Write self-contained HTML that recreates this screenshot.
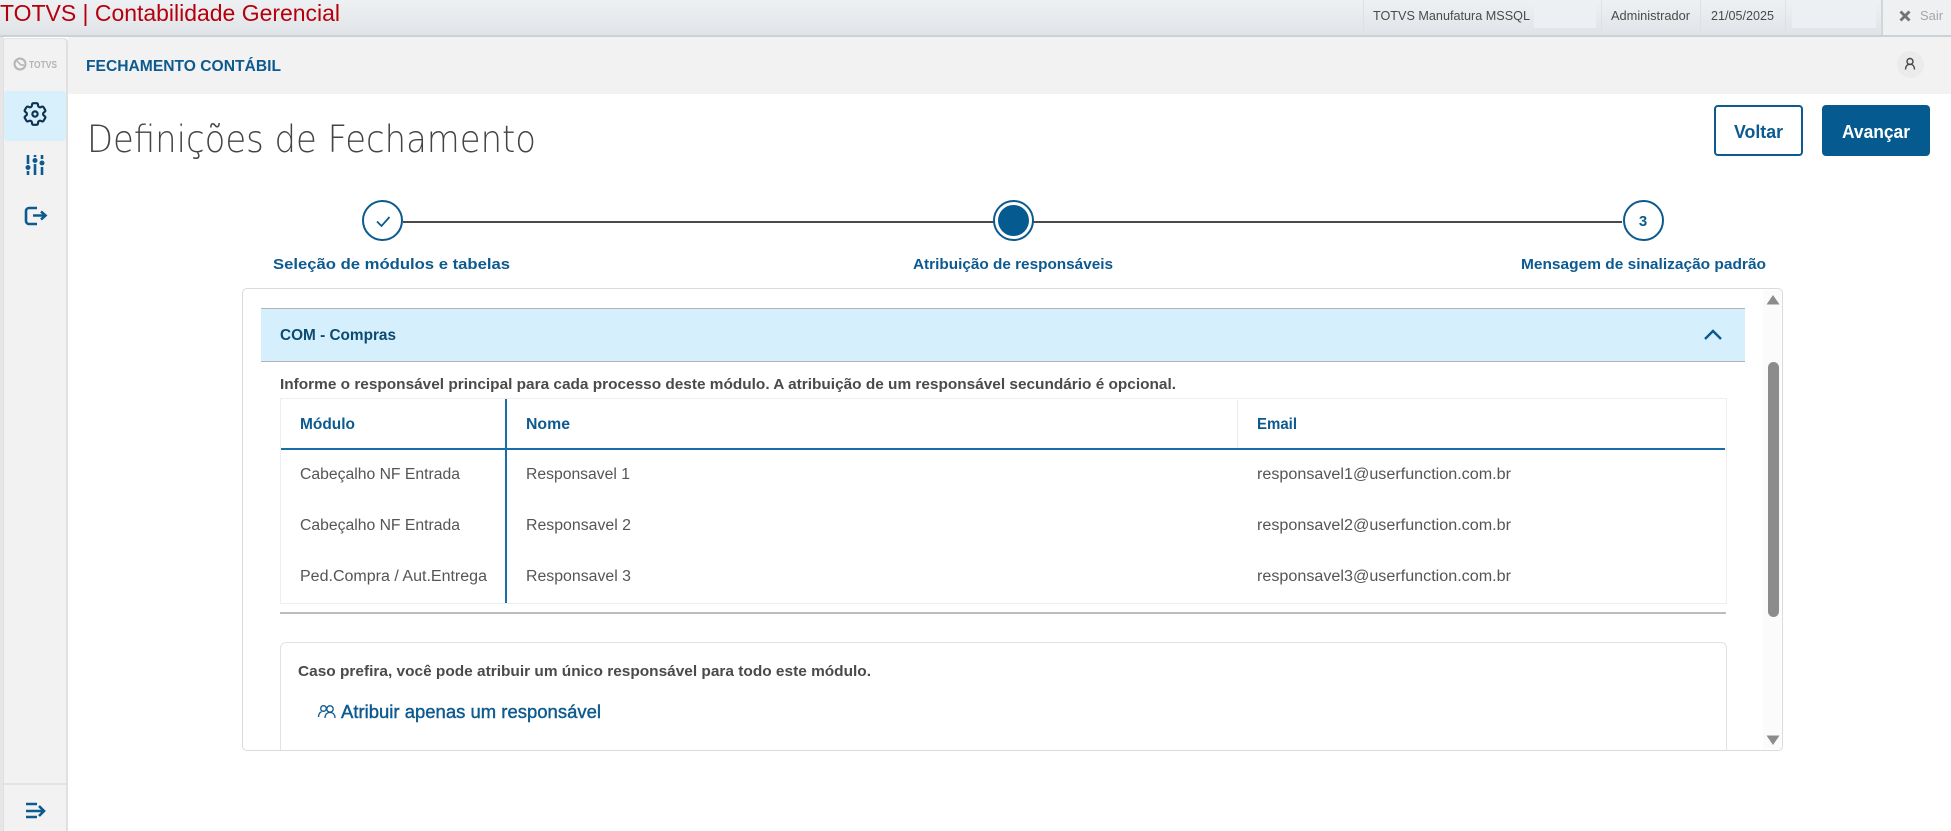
<!DOCTYPE html>
<html lang="pt-BR">
<head>
<meta charset="utf-8">
<title>Definições de Fechamento</title>
<style>
html,body{margin:0;padding:0;width:1951px;height:831px;overflow:hidden;background:#fff;font-family:"Liberation Sans",sans-serif}
.b{position:absolute;box-sizing:border-box}
svg{position:absolute;left:0;top:0}
text{font-family:"Liberation Sans",sans-serif}
</style>
</head>
<body>
<div class="b" style="left:0;top:0;width:1951px;height:37px;background:linear-gradient(#eef1f3,#e0e4e8);border-bottom:2px solid #cdd1d5"></div>
<div class="b" style="left:1534px;top:0;width:62px;height:28px;background:#edf0f3"></div>
<div class="b" style="left:1792px;top:0;width:84px;height:28px;background:#edf0f3"></div>
<div class="b" style="left:1363px;top:0;width:1px;height:35px;background:#dde1e4"></div>
<div class="b" style="left:1601px;top:0;width:1px;height:35px;background:#dde1e4"></div>
<div class="b" style="left:1700px;top:0;width:1px;height:35px;background:#dde1e4"></div>
<div class="b" style="left:1785px;top:0;width:1px;height:35px;background:#dde1e4"></div>
<div class="b" style="left:1881px;top:0;width:70px;height:35px;background:#eef0f2;border-left:2px solid #d2d6da"></div>

<div class="b" style="left:0;top:37px;width:4px;height:794px;background:#e6e6e6"></div>
<div class="b" style="left:3px;top:38px;width:65px;height:793px;background:#f2f2f2;border:1px solid #e0e0e0;border-right:2px solid #e0e0e0;border-bottom:0;border-radius:4px 4px 0 0"></div>
<div class="b" style="left:4px;top:91px;width:62px;height:50px;background:#d8effc;border-radius:3px"></div>
<div class="b" style="left:4px;top:783px;width:62px;height:2px;background:#e2e2e2"></div>
<div class="b" style="left:68px;top:37px;width:1883px;height:57px;background:#f2f2f2"></div>
<div class="b" style="left:1897px;top:51px;width:27px;height:27px;border-radius:50%;background:#ebebeb"></div>

<div class="b" style="left:1714px;top:105px;width:89px;height:51px;background:#fff;border:2px solid #0c5a8f;border-radius:4px"></div>
<div class="b" style="left:1822px;top:105px;width:108px;height:51px;background:#055a8f;border-radius:4px"></div>

<div class="b" style="left:403px;top:221px;width:1219px;height:2px;background:#4a4a4a"></div>
<div class="b" style="left:362px;top:200px;width:41px;height:41px;background:#fff;border:2px solid #0c5a8f;border-radius:50%"></div>
<div class="b" style="left:993px;top:200px;width:41px;height:41px;background:#fff;border:2px solid #0c5a8f;border-radius:50%"></div>
<div class="b" style="left:998px;top:205px;width:31px;height:31px;background:#055a8f;border-radius:50%"></div>
<div class="b" style="left:1623px;top:200px;width:41px;height:41px;background:#fff;border:2px solid #0c5a8f;border-radius:50%"></div>

<div class="b" style="left:242px;top:288px;width:1541px;height:463px;background:#fff;border:1.500px solid #dadada;border-radius:5px"></div>
<div class="b" style="left:1763px;top:290px;width:18px;height:459px;background:#fbfbfb"></div>
<div class="b" style="left:1768px;top:362px;width:11px;height:255px;background:#8c8c8c;border-radius:6px"></div>
<div class="b" style="left:261px;top:308px;width:1484px;height:54px;background:#d6effd;border-top:1.500px solid #b0b4b7;border-bottom:1.500px solid #b0b4b7"></div>

<div class="b" style="left:280px;top:398px;width:1447px;height:206px;border:1.500px solid #eeeeee"></div>
<div class="b" style="left:281px;top:448px;width:1444px;height:2px;background:#1a6ea8"></div>
<div class="b" style="left:505px;top:399px;width:2px;height:204px;background:#1a6ea8"></div>
<div class="b" style="left:1237px;top:400px;width:1px;height:48px;background:#e9e9e9"></div>
<div class="b" style="left:280px;top:612px;width:1446px;height:2px;background:#bdbdbd"></div>
<div class="b" style="left:280px;top:642px;width:1447px;height:108px;border:1.500px solid #e2e2e2;border-bottom:0;border-radius:6px 6px 0 0"></div>

<svg width="1951" height="831" viewBox="0 0 1951 831" xmlns="http://www.w3.org/2000/svg">
  <text x="0" y="21" font-size="23" fill="#b5000c" textLength="340" lengthAdjust="spacingAndGlyphs">TOTVS | Contabilidade Gerencial</text>
  <g font-size="12.500" fill="#4a4a4a">
    <text x="1373" y="20" textLength="157" lengthAdjust="spacingAndGlyphs">TOTVS Manufatura MSSQL</text>
    <text x="1611" y="20" textLength="79" lengthAdjust="spacingAndGlyphs">Administrador</text>
    <text x="1711" y="20" textLength="63" lengthAdjust="spacingAndGlyphs">21/05/2025</text>
  </g>
  <path d="M1900.500 11.500l9 9M1909.500 11.500l-9 9" stroke="#6f7478" stroke-width="2.800" fill="none"/>
  <text x="1920" y="20" font-size="12.500" fill="#a3a7ab" textLength="23" lengthAdjust="spacingAndGlyphs">Sair</text>

  <circle cx="20" cy="64" r="5.500" fill="none" stroke="#b4b4b4" stroke-width="2"/>
  <path d="M17 61l4 4h3" fill="none" stroke="#b4b4b4" stroke-width="1.500"/>
  <text x="29" y="68" font-size="10" font-weight="700" fill="#b4b4b4" textLength="28" lengthAdjust="spacingAndGlyphs">TOTVS</text>

  <g transform="translate(35 114) scale(1.2) translate(-12 -12)" fill="none" stroke="#0b3350" stroke-width="1.800">
    <path d="M9.594 3.94c.09-.542.56-.94 1.11-.94h2.593c.55 0 1.02.398 1.11.94l.213 1.281c.063.374.313.686.645.87.074.04.147.083.22.127.325.196.72.257 1.075.124l1.217-.456a1.125 1.125 0 0 1 1.37.49l1.296 2.247a1.125 1.125 0 0 1-.26 1.431l-1.003.827c-.293.241-.438.613-.43.992a7.723 7.723 0 0 1 0 .255c-.008.378.137.75.43.991l1.004.827c.424.35.534.955.26 1.43l-1.298 2.247a1.125 1.125 0 0 1-1.369.491l-1.217-.456c-.355-.133-.75-.072-1.076.124a6.47 6.47 0 0 1-.22.128c-.331.183-.581.495-.644.869l-.213 1.281c-.09.543-.56.94-1.11.94h-2.594c-.55 0-1.019-.398-1.11-.94l-.213-1.281c-.062-.374-.312-.686-.644-.87a6.52 6.52 0 0 1-.22-.127c-.325-.196-.72-.257-1.076-.124l-1.217.456a1.125 1.125 0 0 1-1.369-.49l-1.297-2.247a1.125 1.125 0 0 1 .26-1.431l1.004-.827c.292-.24.437-.613.43-.991a6.932 6.932 0 0 1 0-.255c.007-.38-.138-.751-.43-.992l-1.004-.827a1.125 1.125 0 0 1-.26-1.43l1.297-2.247a1.125 1.125 0 0 1 1.37-.491l1.216.456c.356.133.751.072 1.076-.124.072-.044.146-.086.22-.128.332-.183.582-.495.644-.869l.214-1.28Z"/>
    <circle cx="12" cy="12" r="2.200"/>
  </g>
  <g stroke="#0c5a8f" stroke-width="2.600" fill="none">
    <path d="M28 155v9M28 171v4M35 155v2M35 164v11M42 155v4M42 167v8"/>
    <circle cx="28" cy="167.500" r="2" fill="#0c5a8f" stroke-width="1"/>
    <circle cx="35" cy="160.500" r="2" fill="#0c5a8f" stroke-width="1"/>
    <circle cx="42" cy="163" r="2" fill="#0c5a8f" stroke-width="1"/>
    <path d="M37 208h-8a3 3 0 0 0-3 3v10a3 3 0 0 0 3 3h8M33 215.500h12M41 211.500l4.500 4-4.500 4"/>
  </g>
  <g stroke="#0c5a8f" stroke-width="2.600" fill="none">
    <path d="M26 804h11M26 811h17M26 817h11M39 806l5 5-5 5"/>
  </g>

  <text x="86" y="71" font-size="15.500" font-weight="700" fill="#0c5a8f" textLength="195" lengthAdjust="spacingAndGlyphs">FECHAMENTO CONTÁBIL</text>
  <g transform="translate(1910 64)" fill="none" stroke="#444" stroke-width="1.400">
    <circle cx="0" cy="-2.500" r="3"/><path d="M-4.500 5.500c0-3.500 2-5.300 4.500-5.300s4.500 1.800 4.500 5.300"/>
  </g>
  <text x="87" y="152" font-size="37" fill="#444" style="font-family:'DejaVu Sans','Liberation Sans',sans-serif" font-weight="200" textLength="449" lengthAdjust="spacingAndGlyphs">Definições de Fechamento</text>
  <text x="1734" y="138" font-size="18" font-weight="700" fill="#0c5a8f" textLength="49" lengthAdjust="spacingAndGlyphs">Voltar</text>
  <text x="1842" y="138" font-size="18" font-weight="700" fill="#fff" textLength="68" lengthAdjust="spacingAndGlyphs">Avançar</text>

  <path d="M377 221.500l4.500 4.500 8-9" fill="none" stroke="#0c5a8f" stroke-width="1.800"/>
  <text x="1643" y="226" font-size="15" font-weight="700" fill="#0c5a8f" text-anchor="middle">3</text>
  <g font-size="15" font-weight="700" fill="#0c5a8f">
    <text x="273" y="269" textLength="237" lengthAdjust="spacingAndGlyphs">Seleção de módulos e tabelas</text>
    <text x="913" y="269" textLength="200" lengthAdjust="spacingAndGlyphs">Atribuição de responsáveis</text>
    <text x="1521" y="269" textLength="245" lengthAdjust="spacingAndGlyphs">Mensagem de sinalização padrão</text>
  </g>

  <text x="280" y="340" font-size="16" font-weight="700" fill="#0b4a72" textLength="116" lengthAdjust="spacingAndGlyphs">COM - Compras</text>
  <path d="M1705 339l8-8 8 8" fill="none" stroke="#0c5a8f" stroke-width="2.400"/>
  <text x="280" y="389" font-size="15" font-weight="700" fill="#4a4a4a" textLength="896" lengthAdjust="spacingAndGlyphs">Informe o responsável principal para cada processo deste módulo. A atribuição de um responsável secundário é opcional.</text>

  <g font-size="16" font-weight="700" fill="#0c5a8f">
    <text x="300" y="429" textLength="55" lengthAdjust="spacingAndGlyphs">Módulo</text>
    <text x="526" y="429" textLength="44" lengthAdjust="spacingAndGlyphs">Nome</text>
    <text x="1257" y="429" textLength="40" lengthAdjust="spacingAndGlyphs">Email</text>
  </g>
  <g font-size="15.500" fill="#555">
    <text x="300" y="479" textLength="160" lengthAdjust="spacingAndGlyphs">Cabeçalho NF Entrada</text>
    <text x="526" y="479" textLength="104" lengthAdjust="spacingAndGlyphs">Responsavel 1</text>
    <text x="1257" y="479" textLength="254" lengthAdjust="spacingAndGlyphs">responsavel1@userfunction.com.br</text>
    <text x="300" y="530" textLength="160" lengthAdjust="spacingAndGlyphs">Cabeçalho NF Entrada</text>
    <text x="526" y="530" textLength="105" lengthAdjust="spacingAndGlyphs">Responsavel 2</text>
    <text x="1257" y="530" textLength="254" lengthAdjust="spacingAndGlyphs">responsavel2@userfunction.com.br</text>
    <text x="300" y="581" textLength="187" lengthAdjust="spacingAndGlyphs">Ped.Compra / Aut.Entrega</text>
    <text x="526" y="581" textLength="105" lengthAdjust="spacingAndGlyphs">Responsavel 3</text>
    <text x="1257" y="581" textLength="254" lengthAdjust="spacingAndGlyphs">responsavel3@userfunction.com.br</text>
  </g>

  <text x="298" y="676" font-size="15" font-weight="700" fill="#4a4a4a" textLength="573" lengthAdjust="spacingAndGlyphs">Caso prefira, você pode atribuir um único responsável para todo este módulo.</text>
  <g fill="none" stroke="#0c5a8f" stroke-width="1.300">
    <circle cx="323.500" cy="708.500" r="2.800"/>
    <path d="M318.500 717c.2-3 1-4.500 3-5.200"/>
    <circle cx="330" cy="709" r="3.200"/>
    <path d="M325 718c0-3.500 2-5.500 5-5.500s5 2 5 5.500"/>
  </g>
  <text x="341" y="718" font-size="18" font-weight="400" fill="#0c5a8f" stroke="#0c5a8f" stroke-width=".4" textLength="260" lengthAdjust="spacingAndGlyphs">Atribuir apenas um responsável</text>

  <path d="M1773 295l6.500 9.500h-13z" fill="#8c8c8c"/>
  <path d="M1773 745l6.500-9.500h-13z" fill="#8c8c8c"/>
</svg>
</body>
</html>
